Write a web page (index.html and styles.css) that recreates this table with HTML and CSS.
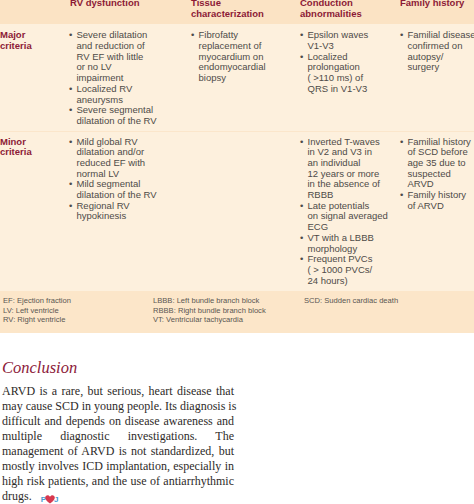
FILE: index.html
```html
<!DOCTYPE html>
<html>
<head>
<meta charset="utf-8">
<link rel="stylesheet" href="styles.css">
</head>
<body>
<div class="table">
  <div class="row head">
    <div class="cell"></div>
    <div class="cell hc">RV dysfunction</div>
    <div class="cell hc">Tissue<br>characterization</div>
    <div class="cell hc">Conduction<br>abnormalities</div>
    <div class="cell hc">Family history</div>
  </div>
  <div class="row major">
    <div class="cell label">Major<br>criteria</div>
    <div class="cell"><ul>
      <li><span>Severe dilatation<br>and reduction of<br>RV EF with little<br>or no LV<br>impairment</span></li>
      <li><span>Localized RV<br>aneurysms</span></li>
      <li><span>Severe segmental<br>dilatation of the RV</span></li>
    </ul></div>
    <div class="cell"><ul>
      <li><span>Fibrofatty<br>replacement of<br>myocardium on<br>endomyocardial<br>biopsy</span></li>
    </ul></div>
    <div class="cell"><ul>
      <li><span>Epsilon waves<br>V1-V3</span></li>
      <li><span>Localized<br>prolongation<br>( &gt;110 ms) of<br>QRS in V1-V3</span></li>
    </ul></div>
    <div class="cell"><ul>
      <li><span>Familial disease<br>confirmed on<br>autopsy/<br>surgery</span></li>
    </ul></div>
  </div>
  <div class="row minor">
    <div class="cell label">Minor<br>criteria</div>
    <div class="cell"><ul>
      <li><span>Mild global RV<br>dilatation and/or<br>reduced EF with<br>normal LV</span></li>
      <li><span>Mild segmental<br>dilatation of the RV</span></li>
      <li><span>Regional RV<br>hypokinesis</span></li>
    </ul></div>
    <div class="cell"></div>
    <div class="cell"><ul>
      <li><span>Inverted T-waves<br>in V2 and V3 in<br>an individual<br>12 years or more<br>in the absence of<br>RBBB</span></li>
      <li><span>Late potentials<br>on signal averaged<br>ECG</span></li>
      <li><span>VT with a LBBB<br>morphology</span></li>
      <li><span>Frequent PVCs<br>( &gt; 1000 PVCs/<br>24 hours)</span></li>
    </ul></div>
    <div class="cell"><ul>
      <li><span>Familial history<br>of SCD before<br>age 35 due to<br>suspected<br>ARVD</span></li>
      <li><span>Family history<br>of ARVD</span></li>
    </ul></div>
  </div>
  <div class="foot">
    <div>EF: Ejection fraction<br>LV: Left ventricle<br>RV: Right ventricle</div>
    <div>LBBB: Left bundle branch block<br>RBBB: Right bundle branch block<br>VT: Ventricular tachycardia</div>
    <div>SCD: Sudden cardiac death</div>
  </div>
</div>

<section class="concl">
  <h2 class="title">Conclusion</h2>
  <p class="para">
    <span class="ln">ARVD is a rare, but serious, heart disease that</span>
    <span class="ln">may cause SCD in young people. Its diagnosis is</span>
    <span class="ln">difficult and depends on disease awareness and</span>
    <span class="ln">multiple diagnostic investigations. The</span>
    <span class="ln">management of ARVD is not standardized, but</span>
    <span class="ln">mostly involves ICD implantation, especially in</span>
    <span class="ln">high risk patients, and the use of antiarrhythmic</span>
    <span class="ln last">drugs. <span class="logo"><span class="lp">P</span><svg class="heart" width="10" height="9" viewBox="0 0 10 9"><path d="M5 8.6 C2 6.4 0.2 4.6 0.2 2.6 C0.2 1.1 1.3 0.2 2.6 0.2 C3.6 0.2 4.5 0.8 5 1.7 C5.5 0.8 6.4 0.2 7.4 0.2 C8.7 0.2 9.8 1.1 9.8 2.6 C9.8 4.6 8 6.4 5 8.6 Z" fill="#d8384e"/></svg><span class="lp">J</span></span></span>
  </p>
</section>
</body>
</html>
```

FILE: styles.css
```css
* { box-sizing: border-box; }
html, body { margin: 0; padding: 0; background: #ffffff; }
body { width: 474px; height: 504px; overflow: hidden; }

.table {
  margin-top: -2px;
  font-family: "Liberation Sans", Arial, sans-serif;
  font-size: 9.5px;
  line-height: 10.7px;
  color: #4e4b48;
}

.row {
  display: grid;
  grid-template-columns: 68px 122px 109px 100px 75px;
}

.head {
  background: #fbe3c4;
  padding: 0 0 4.3px 0;
}

.hc {
  font-weight: bold;
  color: #8c1a36;
  padding-left: 1px;
}
.hc:nth-child(2) { padding-left: 2px; }

.major {
  background: #fdf0dd;
  padding: 6.6px 0 4px 0;
  border-bottom: 1.4px solid #fbe6cb;
}

.minor {
  background: #fdf0dd;
  padding: 4.9px 0 4.9px 0;
}

.label {
  font-weight: bold;
  color: #8c1a36;
}

ul {
  list-style: none;
  margin: 0;
  padding: 0;
}

li {
  display: flex;
  white-space: nowrap;
}

li::before {
  content: "\2022";
  flex: none;
  width: 7.5px;
  padding-left: 1px;
}

.foot {
  display: grid;
  grid-template-columns: 150px 151px 173px;
  background: #fce6c9;
  padding: 5px 0 8.8px 3px;
  font-size: 7.6px;
  line-height: 9.4px;
  color: #5a5653;
}

.concl {
  padding: 25px 240px 0 2px;
  font-family: "Liberation Serif", "Times New Roman", serif;
}

.title {
  margin: 0;
  font-style: italic;
  font-weight: normal;
  font-size: 16.5px;
  line-height: 20px;
  color: #8c1a3a;
  padding-bottom: 5.5px;
}

.para {
  margin: 0;
  font-size: 12px;
  line-height: 15px;
  color: #2e2b29;
}

.ln {
  display: block;
  text-align: justify;
  text-align-last: justify;
  white-space: nowrap;
}
.ln.last { text-align-last: left; }

.logo {
  display: inline-flex;
  align-items: center;
  margin-left: 6px;
  vertical-align: -2px;
}
.lp {
  font-family: "Liberation Sans", Arial, sans-serif;
  font-weight: bold;
  font-size: 8px;
  line-height: 9px;
  color: #4a9ad0;
}
.heart { display: block; margin: 0 -1px; }
```
